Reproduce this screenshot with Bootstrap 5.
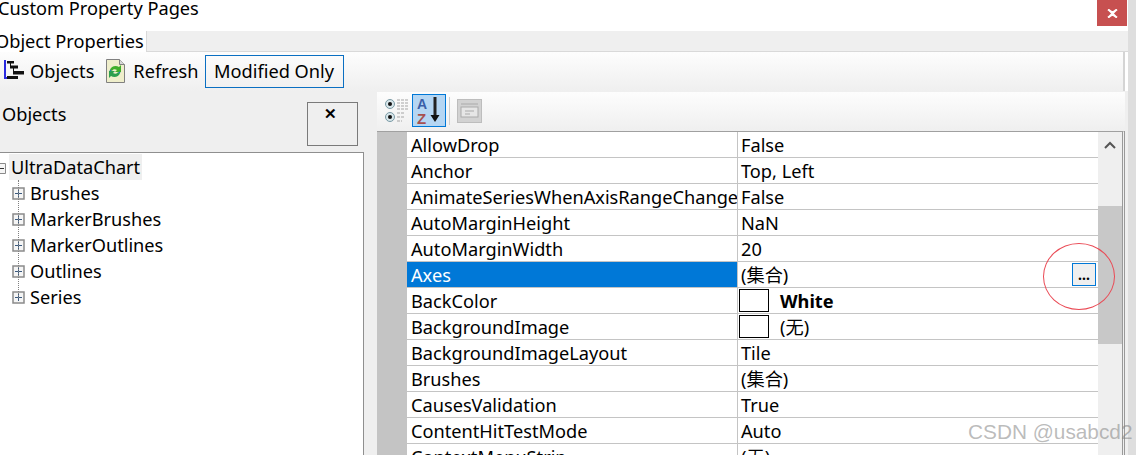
<!DOCTYPE html>
<html lang="en">

<head>
    <meta charset="UTF-8" />
    <meta name="viewport" content="width=device-width, initial-scale=1" />
    <title>Custom Property Pages</title>

    <link href="https://cdn.jsdelivr.net/npm/bootstrap@5.3.0/dist/css/bootstrap.min.css" rel="stylesheet" />
    <style>
        html, body { height: 455px; overflow: hidden; }
        body { background: #fff; font-family: "Noto Sans", "Noto Sans CJK SC", sans-serif; font-size: 18.2px; color: #000; line-height: 26px; }
        .page-wrap { width: 1136px; height: 455px; position: relative; overflow: hidden; }
        .win-main { width: 1128px; height: 455px; }
        .title-bar { height: 31px; }
        .title-text { margin-left: -2px; line-height: 17px; }
        .close-x { width: 30px; height: 26px; margin-right: 1px; background: #c75050; }
        .side-strip { position: absolute; top: 0; right: 0; width: 8px; height: 455px; background: #dedede; }
        .tab-strip { height: 21px; background: #efefef; border-bottom: 1px solid #d9d9d9; }
        .tab-one { width: 147px; height: 21px; background: #fff; border-right: 1px solid #d9d9d9; line-height: 20px; overflow: hidden; white-space: nowrap; }
        .tab-one span { margin-left: -5px; }
        .tool-row { height: 40px; width: 1125px; background: linear-gradient(#fdfdfd, #efefef); border-right: 2px solid #d4d4d4; }
        .tool-btn { height: 30px; margin-top: 4px; white-space: nowrap; }
        .tool-objects { margin-left: 4px; }
        .tool-objects svg { margin-right: 6px; }
        .tool-refresh { margin-left: 12px; }
        .tool-refresh svg { margin-right: 8px; }
        .mod-btn { height: 33px; width: 139px; border: 1px solid #0a6fc2; line-height: 30px; text-align: center; margin-top: 3px; margin-left: 6px; white-space: nowrap; }
        .body-area { height: 364px; background: #efefef; }
        .left-pane { width: 364px; }
        .obj-head { height: 61px; }
        .obj-label { margin-left: 2px; padding-top: 10px; }
        .obj-close { width: 51px; height: 44px; border: 1px solid #7a7a7a; margin: 11px 6px 0 0; padding-right: 4px; font-weight: 700; font-size: 15px; line-height: 20px; }
        .tree-box { height: 303px; background: #fff; border-top: 1px solid #8f8f8f; border-right: 1px solid #8f8f8f; padding-top: 1px; position: relative; }
        .tree-row { height: 26px; white-space: nowrap; }
        .tree-root { background: #efefef; margin-left: 3px; padding: 0 2px 0 2px; height: 26px; }
        .tree-kid { margin-left: 12px; }
        .exp-box { width: 13px; height: 13px; flex: none; margin-right: 5px; }
        .tree-line { position: absolute; left: 18px; top: 27px; height: 118px; border-left: 1px dotted #808080; }
        .grid-side { width: 748px; margin-left: 13px; }
        .grid-tools { height: 39px; margin-top: 1px; background: linear-gradient(#fdfdfd, #efefef); padding-left: 6px; }
        .ico-btn { height: 33px; margin-top: 2px; }
        .ico-cat { width: 26px; margin-right: 3px; }
        .ico-on { width: 34px; background: #b5d6f3; border: 1px solid #0078d7; }
        .ico-off { width: 25px; }
        .tool-sep { width: 1px; height: 28px; background: #cfcfcf; margin: 5px 7px 0 3px; }
        .grid-box { height: 325px; border-top: 1px solid #a0a0a0; border-right: 3px double #999; overflow: hidden; }
        .grid-gutter { width: 30px; background: #c4c4c4; flex: none; }
        .grid-rows { width: 691px; background: #fff; flex: none; }
        .prop-row { height: 26px; border-bottom: 1px solid #c4c4c4; position: relative; white-space: nowrap; }
        .prop-name { width: 331px; flex: none; padding-left: 4px; overflow: hidden; border-right: 1px solid #c4c4c4; line-height: 26px; }
        .prop-val { padding-left: 3px; line-height: 26px; }
        .row-on .prop-name { background: #0078d7; color: #fff; }
        .swatch { width: 30px; height: 23px; border: 1px solid #000; margin: 1px 11px 0 1px; flex: none; }
        .dots-btn { position: absolute; right: 2px; top: 1px; width: 24px; height: 23px; background: #efefef; border: 1px solid #0078d7; font-weight: 700; font-size: 14px; line-height: 22px; text-align: center; }
        .scroll-col { flex: 1 1 auto; background: #efefef; position: relative; }
        .scroll-thumb { position: absolute; top: 74px; left: 0; width: 100%; height: 138px; background: #c8c8c8; }
        .scroll-up { position: absolute; top: 9px; left: 6px; }
        .red-ring { position: absolute; left: 1043px; top: 243px; width: 72px; height: 67px; border: 1px solid #ea4a55; border-radius: 50%; }
        .water-mark { position: absolute; left: 968px; top: 419px; font-family: "Liberation Sans", sans-serif; font-size: 20.8px; line-height: 26px; color: rgba(130,130,130,.55); white-space: nowrap; }
    </style>
</head>

<body>
    <div class="page-wrap">
        <div class="win-main d-flex flex-column">
            <div class="title-bar d-flex justify-content-between bg-white">
                <div class="title-text">Custom Property Pages</div>
                <div class="close-x d-flex align-items-center justify-content-center">
                    <svg width="11" height="9" viewBox="0 0 11 9"><path d="M1 .5 5.5 3.6 10 .5M1 8.5 5.5 5.4 10 8.5M2 1l7 7M9 1 2 8" stroke="#fff" stroke-width="2" fill="none" /></svg>
                </div>
            </div>

            <div class="tab-strip">
                <div class="tab-one"><span>Object Properties</span></div>
            </div>

            <div class="tool-row d-flex align-items-start">
                <div class="tool-btn tool-objects d-flex align-items-center">
                    <svg width="20" height="21" viewBox="0 0 20 21">
                        <path d="M1 0v18h3" stroke="#2a2ae0" stroke-width="2" fill="none" />
                        <path d="M3 1h7v2.500H3zM6 5.500h8v3H6zM9 11h11v3.500H9zM3 16h11v3H3z" fill="#111" />
                        <path d="M6.500 3v3M9.500 8v3" stroke="#111" />
                    </svg>
                    <span>Objects</span>
                </div>
                <div class="tool-btn tool-refresh d-flex align-items-center">
                    <svg width="19" height="24" viewBox="0 0 19 24">
                        <path d="M.5.5h13l5 5v18H.5z" fill="#efeecb" stroke="#808080" />
                        <path d="M13.500.5v5h5" fill="#d8d8d8" stroke="#808080" />
                        <path d="M4 11c1-4 6-5 9-3l2-2v7h-6l2-2c-2-1-4-1-5 1z" fill="#3fae2a" />
                        <path d="M14 14c-1 4-6 5-9 3l-2 2v-7h6l-2 2c2 1 4 1 5-1z" fill="#2d9f4f" />
                        <path d="M4 11l1 1M14 14l-1-1" stroke="#1c7fb0" stroke-width="1.500" />
                    </svg>
                    <span>Refresh</span>
                </div>
                <div class="mod-btn">Modified Only</div>
            </div>

            <div class="body-area d-flex">
                <div class="left-pane d-flex flex-column">
                    <div class="obj-head d-flex justify-content-between">
                        <div class="obj-label">Objects</div>
                        <div class="obj-close text-center">✕</div>
                    </div>
                    <div class="tree-box">
                        <div class="tree-line"></div>
                        <div class="tree-row d-flex align-items-center">
                            <svg width="6" height="11" viewBox="0 0 6 11" style="margin-top:2px">
                                <path d="M0 .5h5.500v10H0" stroke="#8a8a8a" fill="#f5f5f5" />
                                <path d="M0 5.500h4" stroke="#333" />
                            </svg>
                            <span class="tree-root">UltraDataChart</span>
                        </div>
                        <div class="tree-row tree-kid d-flex align-items-center">
                            <svg class="exp-box" viewBox="0 0 13 13"><rect x="1" y="1" width="11" height="11" fill="#f5f5f5" stroke="#8a8a8a" stroke-width="1.500" /><path d="M3 6.500h7M6.500 3v7" stroke="#3a5a80" /></svg>
                            <span>Brushes</span>
                        </div>
                        <div class="tree-row tree-kid d-flex align-items-center">
                            <svg class="exp-box" viewBox="0 0 13 13"><rect x="1" y="1" width="11" height="11" fill="#f5f5f5" stroke="#8a8a8a" stroke-width="1.500" /><path d="M3 6.500h7M6.500 3v7" stroke="#3a5a80" /></svg>
                            <span>MarkerBrushes</span>
                        </div>
                        <div class="tree-row tree-kid d-flex align-items-center">
                            <svg class="exp-box" viewBox="0 0 13 13"><rect x="1" y="1" width="11" height="11" fill="#f5f5f5" stroke="#8a8a8a" stroke-width="1.500" /><path d="M3 6.500h7M6.500 3v7" stroke="#3a5a80" /></svg>
                            <span>MarkerOutlines</span>
                        </div>
                        <div class="tree-row tree-kid d-flex align-items-center">
                            <svg class="exp-box" viewBox="0 0 13 13"><rect x="1" y="1" width="11" height="11" fill="#f5f5f5" stroke="#8a8a8a" stroke-width="1.500" /><path d="M3 6.500h7M6.500 3v7" stroke="#3a5a80" /></svg>
                            <span>Outlines</span>
                        </div>
                        <div class="tree-row tree-kid d-flex align-items-center">
                            <svg class="exp-box" viewBox="0 0 13 13"><rect x="1" y="1" width="11" height="11" fill="#f5f5f5" stroke="#8a8a8a" stroke-width="1.500" /><path d="M3 6.500h7M6.500 3v7" stroke="#3a5a80" /></svg>
                            <span>Series</span>
                        </div>
                    </div>
                </div>

                <div class="grid-side d-flex flex-column">
                    <div class="grid-tools d-flex">
                        <div class="ico-btn ico-cat d-flex align-items-center justify-content-center">
                            <svg width="25" height="26" viewBox="0 0 25 26">
                                <circle cx="6" cy="6" r="4.500" fill="#d8e6ea" stroke="#7a9aa5" /><circle cx="6" cy="6" r="2" fill="#111" />
                                <circle cx="6" cy="19" r="4.500" fill="#d8e6ea" stroke="#7a9aa5" /><circle cx="6" cy="19" r="2" fill="#111" />
                                <path d="M13 2h11M13 5h11M13 8h11M13 11h11M13 15h8M13 19h8M13 23h5" stroke="#a5a5a5" stroke-dasharray="3 1" />
                            </svg>
                        </div>
                        <div class="ico-btn ico-on d-flex align-items-center justify-content-center">
                            <svg width="28" height="29" viewBox="0 0 28 29">
                                <text x="2" y="13" font-family="Liberation Sans" font-size="14" font-weight="700" fill="#3b5fa8">A</text>
                                <text x="2" y="28" font-family="Liberation Sans" font-size="15" font-weight="700" fill="#a85050">Z</text>
                                <path d="M20 1v20" stroke="#222" stroke-width="3" />
                                <path d="M15.500 19h9l-4.500 7z" fill="#111" />
                            </svg>
                        </div>
                        <div class="tool-sep"></div>
                        <div class="ico-btn ico-off d-flex align-items-center justify-content-center">
                            <svg width="25" height="24" viewBox="0 0 25 24">
                                <rect x=".5" y=".5" width="24" height="23" fill="#d2d2d2" stroke="#bdbdbd" />
                                <rect x="4" y="8" width="17" height="10" fill="#e6e6e6" stroke="#aaa" />
                                <path d="M4 5h17M8 12h9M8 15h5" stroke="#aaa" />
                            </svg>
                        </div>
                    </div>
                    <div class="grid-box d-flex">
                        <div class="grid-gutter"></div>
                        <div class="grid-rows">
                            <div class="prop-row d-flex"><div class="prop-name">AllowDrop</div><div class="prop-val">False</div></div>
                            <div class="prop-row d-flex"><div class="prop-name">Anchor</div><div class="prop-val">Top, Left</div></div>
                            <div class="prop-row d-flex"><div class="prop-name">AnimateSeriesWhenAxisRangeChanged</div><div class="prop-val">False</div></div>
                            <div class="prop-row d-flex"><div class="prop-name">AutoMarginHeight</div><div class="prop-val">NaN</div></div>
                            <div class="prop-row d-flex"><div class="prop-name">AutoMarginWidth</div><div class="prop-val">20</div></div>
                            <div class="prop-row row-on d-flex"><div class="prop-name">Axes</div><div class="prop-val">(集合)</div><div class="dots-btn">...</div></div>
                            <div class="prop-row d-flex"><div class="prop-name">BackColor</div><div class="swatch"></div><div class="prop-val fw-bold ps-0">White</div></div>
                            <div class="prop-row d-flex"><div class="prop-name">BackgroundImage</div><div class="swatch"></div><div class="prop-val ps-0">(无)</div></div>
                            <div class="prop-row d-flex"><div class="prop-name">BackgroundImageLayout</div><div class="prop-val">Tile</div></div>
                            <div class="prop-row d-flex"><div class="prop-name">Brushes</div><div class="prop-val">(集合)</div></div>
                            <div class="prop-row d-flex"><div class="prop-name">CausesValidation</div><div class="prop-val">True</div></div>
                            <div class="prop-row d-flex"><div class="prop-name">ContentHitTestMode</div><div class="prop-val">Auto</div></div>
                            <div class="prop-row d-flex"><div class="prop-name">ContextMenuStrip</div><div class="prop-val">(无)</div></div>
                        </div>
                        <div class="scroll-col">
                            <svg class="scroll-up" width="12" height="8" viewBox="0 0 12 8"><path d="M1 7l5-5 5 5" stroke="#555" stroke-width="2" fill="none" /></svg>
                            <div class="scroll-thumb"></div>
                        </div>
                    </div>
                </div>
            </div>
        </div>
        <div class="side-strip"></div>
        <div class="red-ring"></div>
        <div class="water-mark">CSDN @usabcd2</div>
    </div>

    <script src="https://cdn.jsdelivr.net/npm/bootstrap@5.3.0/dist/js/bootstrap.bundle.min.js"></script>
</body>

</html>
